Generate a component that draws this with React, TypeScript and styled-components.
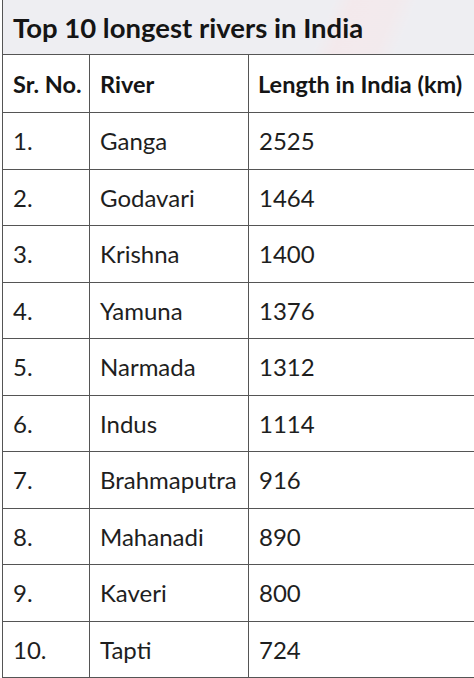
import React from "react";
import styled, {createGlobalStyle} from "styled-components";

type River = {
    no: string;
    name: string;
    length: number;
};

const rivers: River[] = [
    {no: "1.", name: "Ganga", length: 2525},
    {no: "2.", name: "Godavari", length: 1464},
    {no: "3.", name: "Krishna", length: 1400},
    {no: "4.", name: "Yamuna", length: 1376},
    {no: "5.", name: "Narmada", length: 1312},
    {no: "6.", name: "Indus", length: 1114},
    {no: "7.", name: "Brahmaputra", length: 916},
    {no: "8.", name: "Mahanadi", length: 890},
    {no: "9.", name: "Kaveri", length: 800},
    {no: "10.", name: "Tapti", length: 724},
];

const Global = createGlobalStyle`
    html, body {
        margin: 0;
        padding: 0;
        background: #ffffff;
        overflow: hidden;
    }
    body {
        font-family: Lato, "Noto Sans", sans-serif;
        color: #1e1e1e;
    }
`;

const Wrapper = styled.div`
    width: 474px;
    height: 678px;
    padding-left: 2px;
    box-sizing: border-box;
    overflow: hidden;
`;

const Table = styled.table`
    width: 100%;
    border-collapse: collapse;
    table-layout: fixed;
    border-left: 1.5px solid #555;
`;

const Col = styled.col<{$width?: number}>`
    width: ${(p) => (p.$width ? `${p.$width}px` : "auto")};
`;

const Caption = styled.th`
    height: 54px;
    padding: 0 0 0 10px;
    text-align: left;
    font-size: 27.5px;
    font-weight: 700;
    color: #151515;
    white-space: nowrap;
    background: linear-gradient(
        112deg,
        #eeeef2 0%,
        #eeeef2 67%,
        #f3e9ec 71%,
        #f2eaed 80%,
        #eeeef2 84%,
        #eeeef2 100%
    );
    border-bottom: 1.5px solid #555;
`;

const Head = styled.th`
    height: 57px;
    padding: 0 0 0 10px;
    text-align: left;
    font-size: 23.5px;
    font-weight: 700;
    color: #151515;
    border-right: 1.5px solid #555;
    border-bottom: 1.5px solid #555;
    white-space: nowrap;
    overflow: hidden;

    &:last-child {
        border-right: none;
        padding-left: 9px;
    }
`;

const Cell = styled.td`
    height: 55.5px;
    padding: 0 0 0 10px;
    font-size: 24px;
    font-weight: 400;
    color: #1e1e1e;
    border-right: 1.5px solid #555;
    border-bottom: 1.5px solid #555;
    white-space: nowrap;

    &:last-child {
        border-right: none;
    }
`;

function App() {
    return (
        <>
            <Global />
            <Wrapper>
                <Table>
                    <colgroup>
                        <Col $width={87} />
                        <Col $width={159} />
                        <Col />
                    </colgroup>
                    <thead>
                        <tr>
                            <Caption colSpan={3}>Top 10 longest rivers in India</Caption>
                        </tr>
                        <tr>
                            <Head>Sr. No.</Head>
                            <Head>River</Head>
                            <Head>Length in India (km)</Head>
                        </tr>
                    </thead>
                    <tbody>
                        {rivers.map((r) => (
                            <tr key={r.no}>
                                <Cell>{r.no}</Cell>
                                <Cell>{r.name}</Cell>
                                <Cell>{r.length}</Cell>
                            </tr>
                        ))}
                    </tbody>
                </Table>
            </Wrapper>
        </>
    );
}

export default App;
